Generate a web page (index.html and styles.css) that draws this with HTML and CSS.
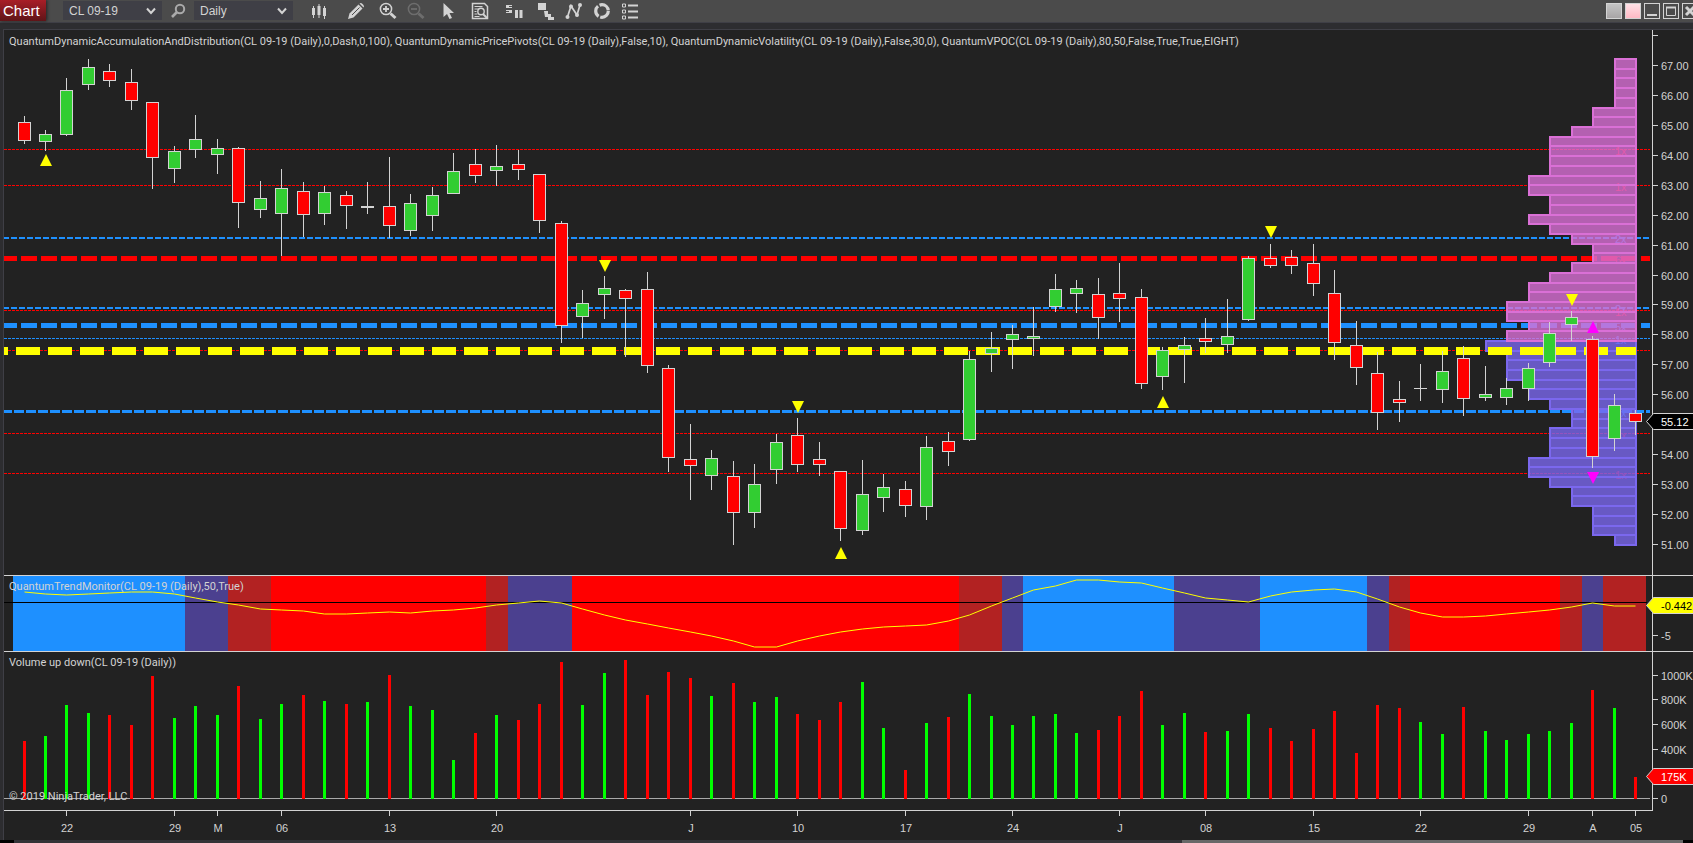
FILE: index.html
```html
<!DOCTYPE html>
<html lang="en">
<head>
    <meta charset="UTF-8">
    <meta name="viewport" content="width=device-width, initial-scale=1.0">
    <title>Chart - CL 09-19 (Daily)</title>
    <link rel="stylesheet" href="styles.css">
</head>
<body>
    <header class="toolbar">
        <h1 class="tab">Chart</h1>
        <div class="picker">
            <select aria-label="Instrument">
                <option>CL 09-19</option>
            </select>
            <svg class="chevron" viewBox="0 0 10 8"><path d="M1 1.5 L5 6 L9 1.5"/></svg>
        </div>
        <button class="tool search" aria-label="Search instrument">
            <svg viewBox="0 0 20 20"><circle cx="12" cy="8" r="4.2" stroke-width="2"/><path d="M9 11 L4 16" stroke-width="2.6"/></svg>
        </button>
        <div class="picker">
            <select aria-label="Interval">
                <option>Daily</option>
            </select>
            <svg class="chevron" viewBox="0 0 10 8"><path d="M1 1.5 L5 6 L9 1.5"/></svg>
        </div>
        <div class="tools">
            <button class="tool" aria-label="Chart style">
                <svg viewBox="0 0 20 20"><g class="solid"><path d="M3 7h3v7H3zM4 5h1v12H4zM8.500 5h3v9h-3zM9.500 3h1v14h-1zM14 7h3v8h-3zM15 5h1v13h-1z"/></g></svg>
            </button>
            <button class="tool sep-xl" aria-label="Drawing tools">
                <svg viewBox="0 0 20 20"><path class="solid" d="M2 18 L3.500 12.500 L12.500 3.500 L16.500 7.500 L7.500 16.500 Z"/><path class="solid" d="M13.500 2.500 Q15 1.500 16.500 3 L17.500 4 Q18.500 5.500 17.500 6.500 Z"/><path class="cut" d="M6 14 L13.500 6.500"/></svg>
            </button>
            <button class="tool sep" aria-label="Zoom in">
                <svg viewBox="0 0 20 20"><circle cx="8" cy="8" r="5.600" stroke-width="1.500"/><path d="M5 8h6M8 5v6" stroke-width="1.800"/><path d="M12.500 12.500 L17.500 17" stroke-width="3"/></svg>
            </button>
            <button class="tool" aria-label="Zoom out" disabled>
                <svg viewBox="0 0 20 20"><circle cx="8" cy="8" r="5.600" stroke-width="1.500"/><path d="M5 8h6" stroke-width="1.800"/><path d="M12.500 12.500 L17.500 17" stroke-width="3"/></svg>
            </button>
            <button class="tool sep" aria-label="Cursor">
                <svg viewBox="0 0 20 20"><path class="solid" d="M5.500 2 L5.500 16 L9 13 L11.500 18 L14 17 L11.500 12 L16 12 Z"/></svg>
            </button>
            <button class="tool sep" aria-label="Data box">
                <svg viewBox="0 0 20 20"><path d="M2.500 2.500h12l3 3v12h-15z" stroke-width="1.500"/><path d="M4.500 5.500h8M4.500 8h4M4.500 10.500h2M4.500 13h3M4.500 15.500h5"/><circle cx="11" cy="10.500" r="3.200" stroke-width="1.400"/><path d="M13 13 L17 17" stroke-width="2"/></svg>
            </button>
            <button class="tool sep-lg" aria-label="Chart trader">
                <svg viewBox="0 0 20 20"><path class="solid" d="M2 4h6v3H2zM2 9h6v3H2zM11 9h3v8h-3zM15.500 9h3v8h-3z"/><path class="cut" d="M5 5.500h3M2 10.500h3"/></svg>
            </button>
            <button class="tool sep" aria-label="Data series">
                <svg viewBox="0 0 20 20"><path class="solid" d="M2 2h8v7H2zM8 10h4v3h3v3h3v3h-6v-3H9z"/></svg>
            </button>
            <button class="tool" aria-label="Indicators">
                <svg viewBox="0 0 20 20"><path d="M3.500 16 L7 5 L13 14 L16 4" stroke-width="1.700"/><g class="solid"><circle cx="3.500" cy="16" r="2"/><circle cx="7" cy="5.500" r="2"/><circle cx="13" cy="14" r="2"/><circle cx="16" cy="4" r="2"/></g></svg>
            </button>
            <button class="tool" aria-label="Strategies">
                <svg viewBox="0 0 20 20"><circle cx="10" cy="10" r="6.300" stroke-width="3.200" stroke-dasharray="11.500 1.700"/></svg>
            </button>
            <button class="tool" aria-label="Properties">
                <svg viewBox="0 0 20 20"><path d="M8 4.500h10M8 10.500h10M8 16.500h10" stroke-width="2"/><path d="M2.500 3h3v3h-3zM2.500 9h3v3h-3zM2.500 15h3v3h-3z"/></svg>
            </button>
        </div>
        <div class="window-buttons">
            <button class="swatch gray" aria-label="Instrument link"></button>
            <button class="swatch pink" aria-label="Interval link"></button>
            <button aria-label="Minimize"><svg viewBox="0 0 14 14"><path d="M2 11h10" stroke-width="2"/></svg></button>
            <button aria-label="Maximize"><svg viewBox="0 0 14 14"><path d="M2.500 3.500h9v8h-9z"/><path d="M2 3.500h10" stroke-width="2"/></svg></button>
            <button aria-label="Close"><svg viewBox="0 0 14 14"><path d="M3 3 L11 11 M11 3 L3 11" stroke-width="3"/></svg></button>
        </div>
    </header>

    <main class="chart">
        <section class="pane price">
            <h2>QuantumDynamicAccumulationAndDistribution(CL 09-19 (Daily),0,Dash,0,100), QuantumDynamicPricePivots(CL 09-19 (Daily),False,10), QuantumDynamicVolatility(CL 09-19 (Daily),False,30,0), QuantumVPOC(CL 09-19 (Daily),80,50,False,True,True,EIGHT)</h2>
            <svg id="price"></svg>
        </section>
        <section class="pane trend">
            <h2>QuantumTrendMonitor(CL 09-19 (Daily),50,True)</h2>
            <svg id="trend"></svg>
        </section>
        <section class="pane volume">
            <h2>Volume up down(CL 09-19 (Daily))</h2>
            <svg id="volume"></svg>
            <p class="copyright">© 2019 NinjaTrader, LLC</p>
        </section>
        <div class="time">
            <svg id="time"></svg>
        </div>
    </main>
    <div class="scrollbar"><div class="thumb"></div></div>

    <script src="chart.js"></script>
</body>
</html>
```
FILE: styles.css
```css
* {
    box-sizing: border-box;
}
body {
    margin: 0;
    height: 100vh;
    display: flex;
    flex-direction: column;
    overflow: hidden;
    background: #2d2d30;
    color: #d3d3d3;
    font-family: "Liberation Sans", Arial, sans-serif;
    font-size: 12px;
}
.toolbar {
    display: flex;
    align-items: center;
    flex: none;
    height: 23px;
    padding-bottom: 1px;
    background: #4b4b4b;
    border-bottom: 1px solid #3f3f46;
}
.tab {
    align-self: stretch;
    width: 46px;
    margin: 0 17px 0 0;
    padding-left: 3px;
    background: linear-gradient(#a81e27, #5f1418);
    box-shadow: 1px 0 3px #222;
    color: #fff;
    font-size: 15px;
    font-weight: normal;
    line-height: 21px;
}
.picker {
    position: relative;
    width: 99px;
    height: 19px;
}
.picker select {
    appearance: none;
    width: 100%;
    height: 100%;
    padding: 0 6px;
    border: 0;
    background: #3f3f46;
    color: #d3d3d3;
    font: inherit;
}
.chevron {
    position: absolute;
    right: 6px;
    top: 6px;
    width: 10px;
    height: 8px;
    pointer-events: none;
}
.toolbar svg {
    fill: none;
    stroke: #d3d3d3;
    stroke-width: 1;
}
.toolbar .chevron {
    stroke-width: 2;
}
.toolbar button {
    padding: 0;
    border: 0;
    background: none;
}
.toolbar .tool {
    display: flex;
    align-items: center;
    justify-content: center;
    width: 28px;
    height: 20px;
}
.tool svg {
    width: 20px;
    height: 20px;
}
.toolbar .solid {
    fill: #d3d3d3;
    stroke: none;
}
.toolbar .cut {
    stroke: #4b4b4b;
}
.tool:disabled {
    opacity: 0.25;
}
.toolbar .search {
    width: 32px;
    opacity: 0.7;
}
.tools {
    display: flex;
    margin-left: 12px;
}
.sep {
    margin-left: 4px;
}
.sep-lg {
    margin-left: 6px;
}
.sep-xl {
    margin-left: 9px;
}
.window-buttons {
    display: flex;
    gap: 3px;
    margin-left: auto;
    margin-right: -5px;
}
.toolbar .window-buttons button {
    display: flex;
    width: 16px;
    height: 16px;
    border: 1px solid #d3d3d3;
}
.window-buttons svg {
    width: 14px;
    height: 14px;
}
.toolbar .window-buttons .gray {
    background: linear-gradient(#c4c4c4, #a8a5a6);
}
.toolbar .window-buttons .pink {
    background: linear-gradient(#ffe0e5, #ffb9c5);
}
.chart {
    flex: 1;
    min-height: 0;
    display: flex;
    flex-direction: column;
    margin: 6px 0 0 3px;
    background: #222;
    border-top: 1px solid #3f3f46;
    border-left: 1px solid #3f3f46;
}
.pane {
    position: relative;
    min-height: 0;
}
.price {
    flex: 545;
}
.trend {
    flex: 76;
}
.volume {
    flex: 159;
}
.time {
    flex: none;
    height: 30px;
}
.chart svg {
    display: block;
    width: 100%;
    height: 100%;
    overflow: hidden;
    font-size: 11px;
}
.pane h2,
.copyright {
    position: absolute;
    left: 5px;
    margin: 0;
    font-family: Roboto, Arial, sans-serif;
    font-size: 11px;
    font-weight: normal;
    line-height: 14px;
    white-space: nowrap;
}
.pane h2 {
    top: 5px;
}
.copyright {
    bottom: 6px;
}
.scrollbar {
    flex: none;
    height: 3px;
    padding: 0 10px 0 14px;
    background: #000;
    display: flex;
    justify-content: flex-end;
}
.scrollbar::before {
    content: "";
    flex: 1;
    background: #333337;
}
.thumb {
    width: 30%;
    background: #686868;
}

/* chart drawing */
.axis,
.tick {
    fill: #d3d3d3;
}
.label {
    fill: #d3d3d3;
}
.wick,
.doji {
    fill: #d3d3d3;
}
.candle {
    stroke: #d3d3d3;
}
.up {
    fill: #32cd32;
}
.down {
    fill: #f00;
}
.vol-up {
    fill: #0f0;
}
.vol-down {
    fill: #f00;
}
.red {
    stroke: #f00;
}
.blue {
    stroke: #1e90ff;
}
.yellow {
    stroke: #ff0;
}
.red-label {
    fill: #f00;
}
.blue-label {
    fill: #1e90ff;
}
.seller {
    fill: rgba(218, 112, 214, 0.8);
    stroke: #da70d6;
    stroke-width: 2;
}
.buyer {
    fill: rgba(123, 104, 238, 0.8);
    stroke: #7b68ee;
    stroke-width: 2;
}
.pivot {
    fill: #ff0;
}
.shock {
    fill: #f0f;
}
.bull {
    fill: #1e90ff;
}
.fade {
    fill: #4b408f;
}
.weak {
    fill: #b22222;
}
.bear {
    fill: #f00;
}
.zero {
    fill: #000;
}
.base {
    fill: #a9a9a9;
}
.curve {
    fill: none;
    stroke: #ff0;
    stroke-width: 1;
}
.tag {
    stroke: #d3d3d3;
    stroke-width: 1;
}
.tag-price {
    fill: #000;
}
.tag-trend {
    fill: #ff0;
}
.tag-volume {
    fill: #f00;
}
.tag-text {
    fill: #fff;
}
.tag-text.dark {
    fill: #000;
}
```
FILE: chart.js
```js
// u = up, d = down, n = doji; high, body top, body bottom, low, volume (K), trend
// price and trend columns are chart levels measured downwards
const bars = [
    ['d', 116, 122, 141, 144, 468, 592], ['u', 130, 134, 142, 151, 509, 594],
    ['u', 78, 90, 135, 136, 760, 595], ['u', 59, 67, 85, 90, 695, 594],
    ['d', 64, 71, 81, 87, 679, 593], ['d', 69, 82, 101, 110, 598, 592],
    ['d', 102, 102, 158, 189, 996, 592], ['u', 146, 151, 169, 183, 655, 594],
    ['u', 115, 139, 150, 158, 752, 598], ['u', 139, 148, 155, 174, 679, 602],
    ['d', 147, 148, 203, 228, 915, 605], ['u', 181, 198, 210, 218, 647, 609],
    ['u', 169, 188, 214, 256, 769, 610], ['d', 182, 191, 215, 237, 842, 611],
    ['u', 186, 192, 214, 225, 793, 614], ['d', 191, 195, 206, 229, 769, 614],
    ['n', 182, 206, 208, 214, 785, 613], ['d', 157, 206, 226, 238, 1004, 612],
    ['u', 194, 203, 231, 236, 752, 613], ['u', 187, 195, 216, 231, 720, 611],
    ['u', 153, 171, 194, 194, 314, 610], ['d', 149, 164, 176, 183, 533, 608],
    ['u', 145, 166, 171, 186, 679, 605], ['d', 150, 164, 170, 180, 639, 603],
    ['d', 174, 174, 221, 233, 769, 601], ['d', 221, 223, 326, 343, 1109, 603],
    ['u', 290, 303, 317, 338, 760, 609], ['u', 276, 288, 295, 319, 1020, 615],
    ['d', 289, 290, 299, 357, 1126, 620], ['d', 272, 289, 366, 373, 842, 624],
    ['d', 365, 368, 458, 472, 1028, 628], ['d', 424, 459, 466, 500, 980, 632],
    ['u', 450, 458, 476, 490, 833, 636], ['d', 461, 476, 513, 545, 939, 641],
    ['u', 464, 484, 513, 528, 785, 647], ['u', 434, 442, 470, 484, 825, 647],
    ['d', 418, 435, 465, 472, 687, 641], ['d', 442, 459, 465, 476, 639, 636],
    ['d', 471, 471, 529, 541, 785, 632], ['u', 460, 494, 531, 535, 947, 629],
    ['u', 474, 487, 498, 512, 574, 627], ['d', 481, 489, 506, 517, 233, 626],
    ['u', 436, 447, 507, 520, 614, 625], ['d', 432, 441, 452, 466, 663, 621],
    ['u', 351, 359, 440, 441, 850, 615], ['u', 332, 348, 354, 372, 671, 606],
    ['u', 325, 334, 340, 369, 598, 598], ['u', 307, 336, 339, 356, 671, 590],
    ['u', 274, 289, 307, 312, 687, 586], ['u', 280, 288, 294, 313, 533, 580],
    ['d', 278, 294, 318, 339, 557, 580], ['d', 263, 293, 299, 322, 671, 582],
    ['d', 289, 297, 384, 389, 874, 583], ['u', 347, 350, 377, 390, 598, 588],
    ['u', 337, 345, 350, 383, 695, 593], ['d', 318, 338, 342, 353, 541, 598],
    ['u', 299, 336, 345, 353, 549, 600], ['u', 256, 258, 320, 321, 687, 602],
    ['d', 244, 258, 266, 268, 574, 596], ['d', 250, 257, 266, 274, 468, 592],
    ['d', 244, 263, 284, 296, 566, 590], ['d', 270, 293, 343, 360, 712, 589],
    ['d', 321, 345, 368, 385, 371, 592], ['d', 352, 373, 413, 430, 760, 599],
    ['d', 381, 399, 403, 422, 736, 607], ['n', 364, 388, 389, 401, 622, 613],
    ['u', 351, 371, 390, 403, 525, 617], ['d', 346, 358, 399, 416, 744, 617],
    ['u', 366, 394, 398, 401, 555, 616], ['u', 378, 388, 398, 405, 476, 614],
    ['u', 363, 368, 389, 401, 525, 612], ['u', 322, 333, 363, 367, 549, 610],
    ['u', 311, 317, 325, 341, 614, 607], ['d', 336, 339, 457, 468, 882, 603],
    ['u', 394, 405, 439, 451, 736, 606], ['d', 410, 413, 422, 435, 175, 606]
];

// level, colour, thickness, dash, gap, phase, strength
const lines = [
    [149, 'red', 1, 3, 1, 0, '1x'],
    [185, 'red', 1, 3, 1, 0, '1x'],
    [237, 'blue', 2, 6, 2, 3, '2x'],
    [256, 'red', 5, 16, 4, 1, '6x'],
    [307, 'blue', 2, 6, 2, 3, '2x'],
    [310, 'red', 1, 3, 1, 0, '1x'],
    [323, 'blue', 5, 16, 4, 1, '5x'],
    [338, 'blue', 1, 3, 1, 0, '1x'],
    [350, 'red', 1, 3, 1, 0, ''],
    [410, 'blue', 3, 10, 2, 2, '3x'],
    [433, 'red', 1, 3, 1, 0, '1x'],
    [473, 'red', 1, 3, 1, 0, '1x']
];

// volume profile rows from the top, counted in units
const profile = [
    1, 1, 1, 1, 1, 2, 2, 3, 4, 4, 4, 4, 5, 5, 4, 4, 5, 4, 3, 2, 2, 3, 4, 5, 5, 6, 6, 5, 6,
    7, 6, 6, 6, 5, 5, 4, 3, 3, 4, 4, 4, 5, 5, 4, 3, 3, 2, 2, 2, 1
];
const sellerRows = 29;
const rowHeight = 9.72;

// bar index, level of the top edge, direction, type
const arrows = [
    [1, 154, 'up', 'pivot'], [27, 260, 'down', 'pivot'], [36, 401, 'down', 'pivot'],
    [38, 547, 'up', 'pivot'], [53, 396, 'up', 'pivot'], [58, 226, 'down', 'pivot'],
    [72, 294, 'down', 'pivot'], [73, 321, 'up', 'shock'], [73, 472, 'down', 'shock']
];

const bands = [
    ['bull', 8], ['fade', 2], ['weak', 2], ['bear', 10], ['weak', 1], ['fade', 3],
    ['bear', 18], ['weak', 2], ['fade', 1], ['bull', 7], ['fade', 4], ['bull', 5],
    ['fade', 1], ['weak', 1], ['bear', 7], ['weak', 1], ['fade', 1], ['weak', 2]
];

const dates = [
    [2, '22'], [7, '29'], [9, 'M'], [12, '06'], [17, '13'], [22, '20'], [31, 'J'],
    [36, '10'], [41, '17'], [46, '24'], [51, 'J'], [55, '08'], [60, '15'],
    [65, '22'], [70, '29'], [73, 'A'], [75, '05']
];

const AXIS = 41;

function add(svg, tag, attrs, text) {
    const el = document.createElementNS('http://www.w3.org/2000/svg', tag);
    for (const key in attrs) el.setAttribute(key, attrs[key]);
    if (text) el.textContent = text;
    svg.appendChild(el);
}

function rect(svg, cls, x, y, width, height) {
    add(svg, 'rect', { class: cls, x, y, width, height });
}

// clears a pane and returns its scales
function setup(id, top, bottom) {
    const svg = document.getElementById(id);
    svg.textContent = '';
    const width = svg.clientWidth;
    const height = svg.clientHeight;
    const plot = width - AXIS;
    const step = (plot - 36.3) / (bars.length - 1);
    return {
        svg, width, height, plot, step,
        x: i => Math.floor(20 + i * step),
        y: v => Math.round((v - top) * height / (bottom - top))
    };
}

function axisLabel(p, y, text) {
    rect(p.svg, 'tick', p.plot, y, 6, 1);
    if (text) add(p.svg, 'text', { class: 'label', x: p.plot + 9, y: y + 5 }, text);
}

function tag(p, y, cls, text, textCls) {
    const x = p.plot;
    const points = [[x - 6, y], [x + 1, y - 8], [p.width, y - 8], [p.width, y + 8], [x + 1, y + 8]];
    add(p.svg, 'polygon', { class: 'tag ' + cls, points: points.map(a => (a[0] + 0.5) + ',' + (a[1] + 0.5)).join(' ') });
    add(p.svg, 'text', { class: 'tag-text ' + textCls, x: x + 9, y: y + 5 }, text);
}

function drawPrice() {
    const p = setup('price', 30, 575);
    const svg = p.svg;
    const right = p.x(bars.length - 1) + 2;

    lines.forEach(([level, color, size, dash, gap, phase, strength]) => {
        const y = p.y(level) + size / 2;
        add(svg, 'line', {
            class: color, x1: 0, x2: p.plot - 2, y1: y, y2: y,
            'stroke-width': size, 'stroke-dasharray': dash + ' ' + gap, 'stroke-dashoffset': 4 - phase
        });
        add(svg, 'text', { class: color + '-label', x: right - 22, y: y + 5 }, strength);
    });

    for (let i = profile.length - 1; i >= 0; i--) {
        const y = p.y(58 + i * rowHeight);
        const next = p.y(58 + (i + 1) * rowHeight);
        const w = Math.round(profile[i] * p.step) + 1;
        rect(svg, i < sellerRows ? 'seller' : 'buyer', right - w, y + 1, w - 1, next - y);
    }

    const mid = p.y(347) + 4;
    add(svg, 'line', {
        class: 'yellow', x1: 0, x2: right - 1, y1: mid, y2: mid,
        'stroke-width': 8, 'stroke-dasharray': '24 8', 'stroke-dashoffset': 20
    });

    bars.forEach(([kind, high, top, bottom, low], i) => {
        const x = p.x(i);
        rect(svg, 'wick', x, p.y(high), 1, p.y(low) - p.y(high));
        if (kind === 'n') {
            rect(svg, 'doji', x - 6, p.y(top), 13, p.y(bottom) - p.y(top));
        } else {
            add(svg, 'rect', {
                class: 'candle ' + (kind === 'u' ? 'up' : 'down'),
                x: x - 5.5, y: p.y(top) + 0.5, width: 12, height: p.y(bottom) - p.y(top) - 1
            });
        }
    });

    arrows.forEach(([i, level, dir, type]) => {
        const x = p.x(i) + 1;
        const y = p.y(level);
        const tip = dir === 'up' ? y : y + 12;
        const base = dir === 'up' ? y + 12 : y;
        add(svg, 'polygon', { class: type, points: `${x},${tip} ${x - 6},${base} ${x + 6},${base}` });
    });

    rect(svg, 'axis', p.plot, 0, 1, p.height);
    for (let price = 68; price >= 51; price--) {
        if (price === 55) continue;
        axisLabel(p, p.y(65 + (67 - price) * 29.93), price === 68 ? '' : price + '.00');
    }
    tag(p, p.y(421), 'tag-price', '55.12', '');
}

function drawTrend() {
    const p = setup('trend', 575, 651);
    const svg = p.svg;
    let start = 0;
    bands.forEach(([cls, count]) => {
        const x1 = Math.round(20 + (start - 0.5) * p.step);
        start += count;
        const x2 = Math.round(20 + (start - 0.5) * p.step);
        rect(svg, cls, x1, 0, x2 - x1, p.height);
    });
    rect(svg, 'zero', 0, p.y(602), p.plot - 5, 1);
    add(svg, 'polyline', {
        class: 'curve',
        points: bars.map((bar, i) => (p.x(i) + 0.5) + ',' + p.y(bar[6])).join(' ')
    });
    rect(svg, 'axis', 0, 0, p.width, 1);
    rect(svg, 'axis', p.plot, 0, 1, p.height);
    axisLabel(p, p.y(635), '-5');
    tag(p, p.y(605), 'tag-trend', '-0.442', 'dark');
}

function drawVolume() {
    const p = setup('volume', 651, 810);
    const svg = p.svg;
    rect(svg, 'base', 0, p.y(798), p.plot - 2, 1);
    bars.forEach((bar, i) => {
        const top = p.y(799 - bar[5] * 0.1232);
        rect(svg, bar[0] === 'd' ? 'vol-down' : 'vol-up', p.x(i) - 1, top, 3, p.y(799) - top);
    });
    rect(svg, 'axis', 0, 0, p.width, 1);
    rect(svg, 'axis', p.plot, 0, 1, p.height);
    [1000, 800, 600, 400, 0].forEach(v => {
        axisLabel(p, p.y(798 - v * 0.1232), v ? v + 'K' : '0');
    });
    tag(p, p.y(776), 'tag-volume', '175K', '');
}

function drawTime() {
    const p = setup('time', 0, 30);
    rect(p.svg, 'axis', 0, 0, p.plot + 1, 1);
    dates.forEach(([i, text]) => {
        rect(p.svg, 'tick', p.x(i), 0, 1, 6);
        add(p.svg, 'text', { class: 'label', x: p.x(i) + 1, y: 22, 'text-anchor': 'middle' }, text);
    });
}

function draw() {
    drawPrice();
    drawTrend();
    drawVolume();
    drawTime();
}

window.addEventListener('resize', draw);
draw();
```
